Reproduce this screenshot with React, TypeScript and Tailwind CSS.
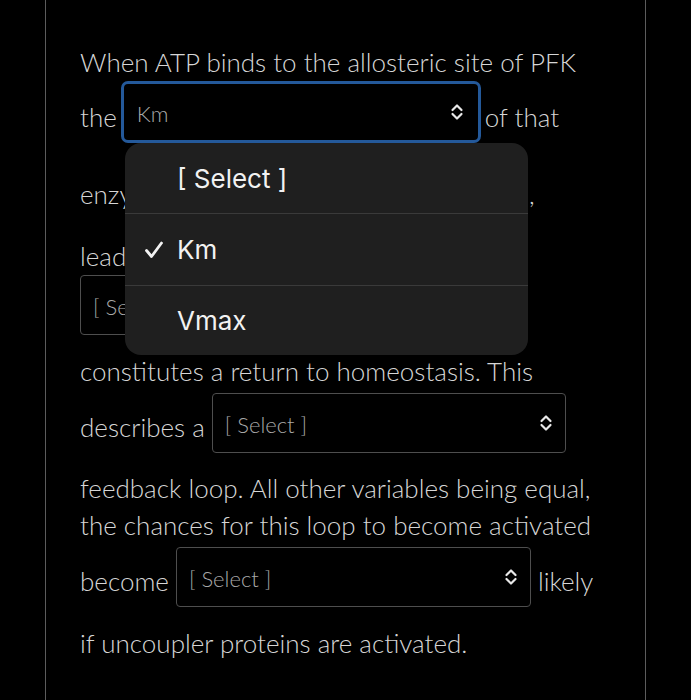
import React from "react";

function Chevrons() {
  return (
    <svg width="14" height="18" viewBox="0 0 14 18" fill="none" className="shrink-0">
      <path d="M2.5 7 L7 2.5 L11.5 7" stroke="#e8e8e8" strokeWidth="2.2" strokeLinecap="round" strokeLinejoin="round" />
      <path d="M2.5 11 L7 15.5 L11.5 11" stroke="#e8e8e8" strokeWidth="2.2" strokeLinecap="round" strokeLinejoin="round" />
    </svg>
  );
}

function SelectBox({ label, width, active }: { label: string; width: string; active?: boolean }) {
  return (
    <div
      className={
        active
          ? `${width} h-[62px] flex items-center justify-between pl-[13px] pr-[14px] rounded-[7px] border-[3px] border-[#24599a] bg-black`
          : `${width} h-[60px] flex items-center justify-between pl-[12px] pr-[12px] rounded-[4px] border border-[#4e4e4e] bg-black`
      }
    >
      <span className="text-[22px] text-[#a8a8a8] font-light pt-[2px]">{label}</span>
      <Chevrons />
    </div>
  );
}

export default function App() {
  const txt = "text-[26px] leading-[37px] text-[#d6d6d6] font-light whitespace-nowrap";
  return (
    <div className="relative w-[691px] h-[700px] bg-black overflow-hidden" style={{ fontFamily: "Lato, 'Open Sans', sans-serif" }}>
      <div className="ml-[45px] w-[601px] h-full border-x border-[#5c5c5c] pl-[34px] pt-[44px] flex flex-col">
        <div className={`${txt} leading-[36px]`}>When ATP binds to the allosteric site of PFK</div>
        <div className="flex items-end gap-[4px]">
          <span className={`${txt} mb-[7px]`}>the</span>
          <SelectBox label="Km" width="w-[360px]" active />
          <span className={`${txt} mb-[7px]`}>of that</span>
        </div>
        <div className="flex items-end gap-[8px] mt-[17px]">
          <span className={`${txt} mb-[7px]`}>enzyme</span>
          <SelectBox label="[ Select ]" width="w-[340px]" />
          <span className={`${txt} mb-[7px] ml-[6px]`}>,</span>
        </div>
        <div className={`${txt} mt-[18px]`}>leads to</div>
        <div className="flex items-end gap-[6px]">
          <SelectBox label="[ Select ]" width="w-[300px]" />
        </div>
        <div className={`${txt} mt-[18px]`}>constitutes a return to homeostasis. This</div>
        <div className="flex items-end gap-[7px] mt-[3px]">
          <span className={`${txt} mb-[7px]`}>describes a</span>
          <SelectBox label="[ Select ]" width="w-[354px]" />
        </div>
        <div className={`${txt} mt-[17px]`}>feedback loop. All other variables being equal,</div>
        <div className={txt}>the chances for this loop to become activated</div>
        <div className="flex items-end gap-[7px] mt-[3px]">
          <span className={`${txt} mb-[7px]`}>become</span>
          <SelectBox label="[ Select ]" width="w-[355px]" />
          <span className={`${txt} mb-[7px]`}>likely</span>
        </div>
        <div className={`${txt} mt-[18px]`}>if uncoupler proteins are activated.</div>
      </div>

      <div
        className="absolute left-[125px] top-[143px] w-[403px] rounded-[16px] bg-[#1f1f1f] flex flex-col overflow-hidden"
        style={{ fontFamily: "Inter, Roboto, sans-serif" }}
      >
        <div className="h-[70px] flex items-center pl-[52px] text-[26px] text-[#f2f2f2]">[ Select ]</div>
        <div className="h-[1px] bg-[#3a3a3a]" />
        <div className="h-[71px] flex items-center text-[26px] text-[#f2f2f2]">
          <span className="w-[52px] flex justify-end pr-[13px]">
            <svg width="20" height="18" viewBox="0 0 20 18" fill="none">
              <path d="M2.5 9.5 L7.5 15.5 L17.5 2" stroke="#f2f2f2" strokeWidth="2.8" strokeLinecap="round" strokeLinejoin="round" />
            </svg>
          </span>
          Km
        </div>
        <div className="h-[1px] bg-[#3a3a3a]" />
        <div className="h-[69px] flex items-center pl-[52px] text-[26px] text-[#f2f2f2]">Vmax</div>
      </div>
    </div>
  );
}
